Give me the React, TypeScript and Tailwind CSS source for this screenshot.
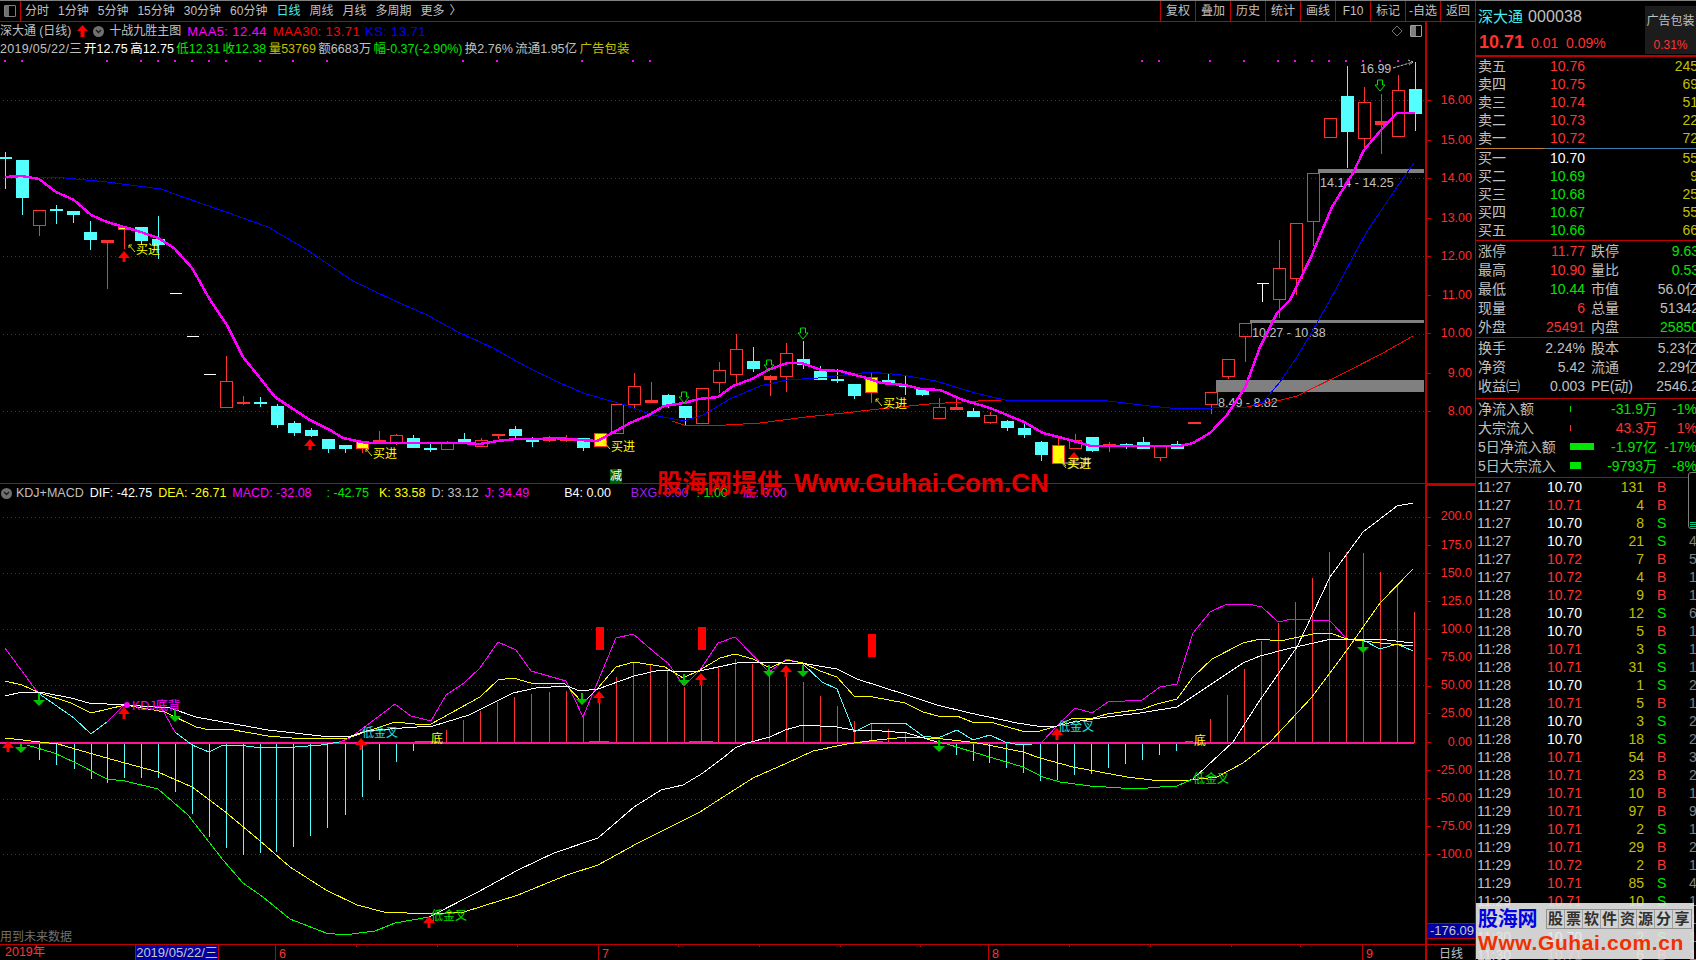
import React from "react";

type Candle = [number, "c" | "r" | "y" | "d" | "t", number, number, number, number];

const cx = (i: number) => Math.round(5.4 + 16.98 * i) + 0.5;

// index, kind, body top, body bottom, wick top, wick bottom
const candles: Candle[] = [
  [0, "c", 157, 159, 152, 189], [1, "c", 160, 198, 160, 215], [2, "r", 210, 226, 210, 236], [3, "c", 209, 211, 205, 224],
  [4, "c", 211, 215, 211, 223], [5, "c", 232, 240, 221, 250], [6, "r", 240, 243, 240, 289], [7, "y", 227, 230, 227, 249],
  [8, "c", 227, 241, 227, 245], [9, "c", 239, 245, 216, 259], [10, "d", 293, 293, 293, 293], [11, "d", 336, 336, 336, 336],
  [12, "d", 374, 374, 374, 374], [13, "r", 381, 408, 356, 408], [14, "r", 402, 404, 396, 405], [15, "c", 402, 403, 397, 407],
  [16, "c", 406, 425, 404, 428], [17, "c", 423, 433, 421, 436], [18, "c", 430, 436, 428, 437], [19, "c", 439, 449, 439, 453],
  [20, "c", 445, 449, 445, 453], [21, "y", 441, 449, 441, 453], [22, "r", 440, 444, 431, 444], [23, "r", 435, 443, 434, 445],
  [24, "c", 438, 448, 435, 448], [25, "c", 448, 449, 444, 452], [26, "r", 442, 450, 441, 450], [27, "c", 439, 443, 433, 443],
  [28, "r", 440, 447, 438, 447], [29, "r", 434, 436, 434, 439], [30, "c", 429, 436, 426, 438], [31, "c", 440, 441, 437, 447],
  [32, "r", 439, 441, 436, 442], [33, "r", 439, 441, 435, 442], [34, "c", 438, 448, 438, 451], [35, "y", 433, 447, 433, 447],
  [36, "r", 404, 434, 404, 434], [37, "r", 386, 405, 373, 408], [38, "r", 400, 403, 382, 403], [39, "c", 395, 405, 394, 408],
  [40, "c", 406, 418, 406, 426], [41, "r", 388, 424, 388, 424], [42, "r", 370, 383, 362, 393], [43, "r", 349, 375, 334, 386],
  [44, "c", 361, 369, 347, 372], [45, "r", 376, 380, 375, 396], [46, "r", 353, 377, 343, 392], [47, "c", 359, 365, 341, 369],
  [48, "c", 371, 380, 366, 380], [49, "c", 379, 380, 369, 383], [50, "c", 384, 396, 384, 399], [51, "y", 377, 393, 373, 403],
  [52, "c", 380, 383, 374, 383], [53, "c", 385, 386, 376, 395], [54, "c", 389, 395, 389, 396], [55, "r", 407, 419, 398, 419],
  [56, "r", 407, 410, 399, 410], [57, "c", 411, 417, 408, 417], [58, "r", 415, 423, 412, 424], [59, "c", 421, 428, 420, 431],
  [60, "c", 428, 435, 424, 438], [61, "c", 442, 455, 441, 461], [62, "y", 445, 464, 437, 464], [63, "r", 440, 449, 434, 449],
  [64, "c", 437, 451, 437, 452], [65, "r", 444, 447, 442, 452], [66, "c", 444, 447, 443, 449], [67, "c", 442, 449, 437, 449],
  [68, "r", 446, 458, 446, 461], [69, "c", 444, 449, 441, 449], [70, "r", 422, 424, 422, 424], [71, "r", 392, 405, 392, 414],
  [72, "r", 359, 377, 359, 379], [73, "r", 323, 337, 323, 362], [74, "t", 283, 283, 283, 302], [75, "r", 268, 300, 240, 318],
  [76, "r", 223, 279, 223, 295], [77, "r", 173, 222, 173, 246], [78, "r", 118, 138, 118, 138], [79, "c", 96, 132, 66, 168],
  [80, "r", 102, 139, 87, 150], [81, "r", 121, 125, 94, 154], [82, "r", 90, 137, 75, 137], [83, "c", 89, 114, 62, 131],
];

const maa5 = [[5, 177], [22, 176], [39, 179], [56, 192], [74, 200], [91, 215], [107, 222], [124, 227], [141, 232], [158, 238], [174, 248], [192, 268], [209, 298], [227, 325], [243, 357], [260, 378], [275, 397], [293, 409], [310, 420], [330, 430], [343, 438], [357, 441], [367, 443], [463, 443], [480, 444], [497, 441], [517, 439], [540, 439], [553, 438], [570, 439], [580, 440], [597, 441], [605, 437], [630, 423], [649, 415], [664, 406], [684, 403], [699, 399], [718, 397], [733, 386], [752, 379], [768, 370], [787, 363], [802, 363], [821, 370], [840, 371], [863, 377], [882, 383], [905, 385], [921, 389], [940, 390], [963, 400], [990, 408], [1024, 422], [1043, 433], [1070, 440], [1091, 446], [1180, 446], [1193, 443], [1210, 433], [1227, 415], [1245, 388], [1260, 347], [1277, 313], [1290, 300], [1311, 257], [1332, 207], [1353, 173], [1364, 150], [1381, 130], [1397, 113], [1415, 113]];
const blue = [[40, 178], [49, 177], [65, 178], [107, 182], [161, 189], [183, 197], [223, 211], [268, 227], [304, 248], [353, 281], [393, 300], [427, 315], [460, 333], [493, 348], [527, 367], [560, 383], [583, 393], [600, 398], [622, 404], [653, 415], [684, 421], [703, 415], [730, 399], [760, 386], [787, 380], [818, 378], [844, 375], [871, 372], [902, 375], [936, 381], [975, 393], [1005, 400], [1100, 400], [1150, 406], [1170, 408], [1213, 408], [1247, 407], [1263, 402], [1280, 382], [1297, 357], [1313, 330], [1330, 300], [1366, 233], [1397, 187], [1414, 163]];
const ma30a = [[672, 421], [684, 425], [726, 425], [760, 423], [806, 417], [844, 413], [879, 409], [929, 404], [978, 401], [1001, 400]];
const ma30b = [[1247, 407], [1277, 401], [1297, 396], [1350, 370], [1383, 353], [1413, 336]];

const kWhite = [[5, 696], [22, 692], [45, 693], [71, 698], [89, 703], [125, 705], [170, 708], [196, 717], [223, 722], [268, 730], [321, 736], [348, 737], [366, 731], [402, 728], [433, 726], [469, 715], [513, 693], [536, 688], [567, 686], [580, 691], [598, 689], [634, 676], [660, 670], [683, 672], [700, 671], [718, 667], [737, 663], [757, 662], [807, 664], [837, 669], [857, 679], [907, 695], [937, 705], [970, 713], [1017, 723], [1037, 726], [1057, 726], [1073, 722], [1107, 717], [1140, 713], [1177, 707], [1213, 683], [1243, 663], [1260, 656], [1287, 649], [1327, 640], [1347, 639], [1387, 640], [1413, 643]];
const kYellow = [[5, 681], [22, 685], [40, 693], [71, 703], [91, 713], [125, 705], [165, 712], [196, 727], [210, 730], [228, 729], [268, 736], [304, 739], [348, 738], [371, 730], [395, 722], [415, 724], [431, 724], [480, 697], [498, 680], [513, 678], [531, 683], [565, 684], [583, 703], [598, 688], [616, 667], [634, 662], [665, 667], [683, 678], [700, 670], [720, 658], [735, 654], [753, 659], [770, 668], [787, 660], [803, 663], [820, 671], [837, 677], [854, 696], [873, 697], [905, 703], [923, 712], [938, 716], [957, 716], [972, 722], [990, 722], [1022, 731], [1040, 731], [1057, 726], [1073, 718], [1090, 719], [1107, 714], [1143, 709], [1157, 704], [1177, 699], [1193, 677], [1212, 659], [1243, 643], [1260, 639], [1280, 641], [1313, 634], [1330, 633], [1347, 639], [1380, 643], [1413, 646]];
const jParts: [string, number[][]][] = [
  ["#ff00ff", [[5, 648], [38, 693]]],
  ["#54ffff", [[38, 693], [74, 718], [91, 734], [107, 722]]],
  ["#ff00ff", [[107, 722], [124, 705], [161, 707], [175, 732]]],
  ["#54ffff", [[175, 732], [192, 745], [209, 752], [223, 745], [237, 745], [254, 747], [295, 747], [321, 745], [339, 742]]],
  ["#ff00ff", [[339, 742], [350, 738], [395, 704], [411, 716], [431, 721], [446, 695], [464, 683], [480, 668], [498, 642], [516, 650], [531, 671], [566, 681], [583, 717], [616, 638], [633, 634], [660, 657], [668, 663], [684, 686], [700, 670], [718, 643], [735, 637], [769, 672], [787, 659], [803, 664]]],
  ["#54ffff", [[803, 664], [822, 682], [837, 689], [854, 732], [872, 723], [905, 723], [923, 736], [938, 738], [957, 730], [973, 740], [990, 735], [1005, 742], [1015, 744], [1032, 744]]],
  ["#ff00ff", [[1032, 744], [1042, 742], [1057, 726], [1075, 708], [1092, 713], [1108, 702], [1142, 700], [1160, 687], [1177, 684], [1193, 633], [1210, 612], [1227, 604], [1248, 604], [1262, 607], [1278, 622], [1292, 619], [1330, 621], [1347, 639], [1363, 640]]],
  ["#54ffff", [[1363, 640], [1380, 649], [1397, 644], [1413, 651]]],
];
const deaParts: [string, number[][]][] = [
  ["#ffff00", [[5, 738], [40, 742], [58, 744], [89, 753], [114, 760], [158, 772], [192, 787], [223, 810], [259, 840], [290, 867], [326, 890], [357, 905], [384, 912], [429, 914], [464, 912], [518, 895], [567, 875], [598, 865], [638, 843], [700, 812], [720, 799], [753, 778], [787, 763], [813, 751], [847, 744], [877, 740], [907, 737], [943, 739], [970, 742], [983, 744], [1023, 752], [1040, 758], [1073, 767], [1127, 777], [1160, 781], [1190, 780], [1217, 777], [1243, 763], [1270, 742], [1312, 697], [1347, 650], [1380, 603], [1413, 569]]],
];
const difParts: [string, number[][]][] = [
  ["#00ff00", [[27, 745], [54, 753], [74, 762], [107, 779], [125, 781], [158, 789], [188, 815], [223, 860], [243, 883], [263, 897], [290, 919], [326, 933], [344, 935], [375, 931], [395, 923], [429, 917]]],
  ["#ffffff", [[429, 917], [478, 892], [518, 870], [554, 853], [598, 838], [634, 807], [661, 790], [683, 785], [703, 773], [723, 758], [735, 748], [747, 743], [770, 737], [785, 730], [803, 725], [837, 727], [853, 730], [870, 730], [907, 733], [937, 742]]],
  ["#00ff00", [[937, 742], [947, 744], [973, 752], [1023, 767], [1043, 777], [1060, 782], [1090, 786], [1137, 789], [1160, 787], [1177, 786], [1193, 779]]],
  ["#ffffff", [[1193, 779], [1233, 742], [1260, 700], [1297, 647], [1330, 577], [1363, 532], [1397, 506], [1413, 503]]],
];
// histogram bottoms, by x
const bars: number[][] = [[39, 760], [56, 765], [74, 769], [91, 779], [107, 783], [124, 778], [141, 778], [158, 778], [175, 792], [192, 814], [209, 837], [226, 848], [243, 855], [260, 853], [276, 852], [293, 847], [310, 836], [327, 828], [345, 815], [362, 797], [379, 780], [396, 762], [413, 751], [446, 730], [463, 720], [480, 711], [497, 702], [514, 697], [531, 694], [549, 692], [566, 691], [583, 717], [599, 697], [616, 677], [633, 663], [650, 665], [667, 670], [684, 687], [701, 677], [718, 667], [735, 659], [752, 664], [769, 675], [786, 673], [803, 682], [820, 696], [837, 706], [854, 721], [871, 724], [888, 729], [905, 733], [956, 755], [973, 761], [989, 763], [1006, 768], [1023, 773], [1040, 781], [1057, 780], [1074, 775], [1091, 774], [1108, 768], [1125, 764], [1142, 760], [1159, 755], [1176, 751], [1210, 719], [1227, 695], [1244, 669], [1261, 641], [1278, 623], [1295, 602], [1312, 578], [1329, 552], [1346, 552], [1363, 553], [1380, 572], [1397, 584], [1414, 612]];

const dotIdx = [5, 22, 107, 141, 158, 175, 192, 209, 226, 260, 293, 327, 463, 497, 582, 633, 650, 1142, 1159, 1210, 1244, 1278, 1295, 1312, 1329, 1346, 1363, 1380, 1398];

const pts = (p: number[][]) => p.map((q) => q.join(",")).join(" ");

function GridLine({ y }: { y: number }) {
  return <line x1={3} x2={1424} y1={y + 0.5} y2={y + 0.5} stroke="#a01010" strokeDasharray="1 3" />;
}

function UpArrow({ x, y1, y2 }: { x: number; y1: number; y2: number }) {
  return <path d={`M${x} ${y1}L${x + 6} ${y1 + 7}H${x + 1.5}V${y2}H${x - 1.5}V${y1 + 7}H${x - 6}Z`} fill="#ff0000" />;
}
function DownArrow({ x, y1, y2 }: { x: number; y1: number; y2: number }) {
  return <path d={`M${x} ${y2}L${x + 6} ${y2 - 6}H${x + 1}V${y1}H${x - 1}V${y2 - 6}H${x - 6}Z`} fill="#00c000" />;
}
function HollowDown({ x, y1 }: { x: number; y1: number }) {
  return <path d={`M${x - 2.5} ${y1}H${x + 2.5}V${y1 + 5}H${x + 5}L${x} ${y1 + 11}L${x - 5} ${y1 + 5}H${x - 2.5}Z`} fill="none" stroke="#00e000" />;
}
function Buy({ x, y }: { x: number; y: number }) {
  return (
    <g>
      <path d={`M${x} ${y - 5}L${x + 6} ${y + 2}M${x} ${y - 5}V${y - 2}M${x} ${y - 5}H${x + 3}`} stroke="#e0e000" fill="none" />
      <text x={x + 7} y={y + 4} fontSize={12} fill="#ffff00">买进</text>
    </g>
  );
}

function UpperChart() {
  return (
    <svg className="block w-[1425px] h-[426px]" viewBox="0 58 1425 426">
      {[100, 178, 256, 334, 411].map((y) => <GridLine key={y} y={y} />)}
      {dotIdx.map((x) => <rect key={x} x={x - 1} y={60} width={2} height={2} fill="#ff00ff" />)}
      <rect x={1318} y={169} width={106} height={4} fill="#808080" />
      <rect x={1250} y={320} width={174} height={3} fill="#808080" />
      <rect x={1216} y={380} width={208} height={12} fill="#808080" />
      <g shapeRendering="crispEdges">
        {candles.map(([i, k, t, b, wt, wb]) => {
          const x = cx(i);
          if (k === "d") return <line key={i} x1={x - 6} x2={x + 6} y1={t + 0.5} y2={t + 0.5} stroke="#ffffff" />;
          if (k === "t")
            return (
              <g key={i} stroke="#ffffff">
                <line x1={x - 6} x2={x + 6} y1={t + 0.5} y2={t + 0.5} />
                <line x1={x} x2={x} y1={t} y2={wb} />
              </g>
            );
          const color = k === "c" ? "#54ffff" : "#ff3232";
          return (
            <g key={i}>
              <line x1={x} x2={x} y1={wt} y2={t} stroke={color} />
              <line x1={x} x2={x} y1={b} y2={wb} stroke={color} />
              <rect
                x={x - 6}
                y={t + 0.5}
                width={12}
                height={Math.max(b - t - 1, 1)}
                fill={k === "r" ? (b - t < 5 ? "#ff3232" : "none") : k === "y" ? "#ffff00" : "#54ffff"}
                stroke={k === "c" ? "#54ffff" : "#ff3232"}
              />
            </g>
          );
        })}
      </g>
      <text x={1320} y={187} fontSize={12.5} fill="#c0c0c0">14.14 - 14.25</text>
      <text x={1252} y={337} fontSize={12.5} fill="#c0c0c0">10.27 - 10.38</text>
      <text x={1218} y={407} fontSize={12.5} fill="#c0c0c0">8.49 - 8.82</text>
      <g shapeRendering="crispEdges">
        <polyline points={pts(blue)} fill="none" stroke="#0000ff" />
        <polyline points={pts(ma30a)} fill="none" stroke="#ff0000" />
        <polyline points={pts(ma30b)} fill="none" stroke="#ff0000" />
        <polyline points={pts(maa5)} fill="none" stroke="#ff00ff" strokeWidth={2.5} />
      </g>
      <UpArrow x={124} y1={251} y2={262} />
      <UpArrow x={310} y1={439} y2={450} />
      <UpArrow x={1074} y1={452} y2={463} />
      <HollowDown x={684} y1={392} />
      <HollowDown x={769} y1={360} />
      <HollowDown x={803} y1={328} />
      <HollowDown x={1380} y1={80} />
      <Buy x={129} y={250} />
      <Buy x={366} y={454} />
      <Buy x={604} y={447} />
      <Buy x={876} y={404} />
      <path d="M1062 463L1066 468M1062 463H1080" stroke="#c0c0c0" fill="none" />
      <text x={1068} y={468} fontSize={12} fill="#a0a0a0">买开</text>
      <Buy x={1060} y={464} />
      <text x={1360} y={73} fontSize={12.5} fill="#c0c0c0">16.99</text>
      <path d="M1393 68L1413 62L1408 60M1413 62L1409 65" stroke="#c0c0c0" strokeDasharray="3 1" fill="none" />
      <rect x={610} y={469} width={12} height={14} fill="#006000" />
      <text x={610} y={480} fontSize={12} fill="#ffffff">减</text>
    </svg>
  );
}

function LowerChart() {
  return (
    <svg className="block w-[1425px] h-[443px]" viewBox="0 502 1425 443">
      {[517, 573, 629, 685, 799, 854].map((y) => <GridLine key={y} y={y} />)}
      <g shapeRendering="crispEdges">
        {bars.map(([x, y]) => (
          <line key={x} x1={x + 0.5} x2={x + 0.5} y1={743} y2={y} stroke={y > 743 ? "#54ffff" : "#ff3232"} />
        ))}
        {[[415, 437], [589, 609], [689, 713], [860, 883], [1185, 1193]].map(([a, b]) => (
          <line key={a} x1={a} x2={b} y1={741.5} y2={741.5} stroke="#00c000" />
        ))}
        <line x1={0} x2={1414} y1={743} y2={743} stroke="#ff1493" strokeWidth={2} />
        {[...deaParts, ...difParts, ...jParts].map(([c, p], i) => (
          <polyline key={i} points={pts(p)} fill="none" stroke={c} />
        ))}
        <polyline points={pts(kYellow)} fill="none" stroke="#ffff00" />
        <polyline points={pts(kWhite)} fill="none" stroke="#ffffff" />
      </g>
      <rect x={596} y={627} width={8} height={23} fill="#ff0000" />
      <rect x={698} y={627} width={8} height={23} fill="#ff0000" />
      <rect x={868} y={634} width={8} height={23} fill="#ff0000" />
      <UpArrow x={8} y1={741} y2={752} />
      <UpArrow x={124} y1={707} y2={719} />
      <UpArrow x={361} y1={738} y2={750} />
      <UpArrow x={599} y1={691} y2={703} />
      <UpArrow x={701} y1={673} y2={685} />
      <UpArrow x={786} y1={665} y2={677} />
      <UpArrow x={1057} y1={728} y2={740} />
      <UpArrow x={429} y1={916} y2={928} />
      <DownArrow x={21} y1={744} y2={753} />
      <DownArrow x={39} y1={693} y2={706} />
      <DownArrow x={175} y1={709} y2={722} />
      <DownArrow x={582} y1={693} y2={705} />
      <DownArrow x={684} y1={674} y2={686} />
      <DownArrow x={769} y1={665} y2={677} />
      <DownArrow x={803} y1={665} y2={677} />
      <DownArrow x={939} y1={740} y2={752} />
      <DownArrow x={1363} y1={641} y2={653} />
      <circle cx={127} cy={705} r={3} fill="#ff00ff" />
      <text x={132} y={710} fontSize={12.5} fill="#ff00ff">KDJ底背</text>
      <text x={362} y={737} fontSize={12} fill="#20e0e0">低金叉</text>
      <text x={1058} y={731} fontSize={12} fill="#20e0e0">低金叉</text>
      <text x={431} y={743} fontSize={12} fill="#ffff00">底</text>
      <text x={1194} y={745} fontSize={12} fill="#ffff00">底</text>
      <text x={431} y={920} fontSize={12} fill="#00e000">低金叉</text>
      <text x={1193} y={783} fontSize={12} fill="#00e000">低金叉</text>
    </svg>
  );
}

function Axis({ labels, ticks, className, children }: { labels: [number, string][]; ticks: number[]; className?: string; children?: React.ReactNode }) {
  return (
    <div className={`relative w-[50px] border-l-2 border-[#c00000] ${className ?? ""}`}>
      {ticks.map((y) => (
        <span key={y} className="absolute left-0 w-[4px] h-px bg-[#c00000]" style={{ top: y }} />
      ))}
      {labels.map(([y, t]) => (
        <span key={t} className="absolute right-[3px] text-[12.5px] leading-[14px] text-[#ff2a2a]" style={{ top: y - 7 }}>
          {t}
        </span>
      ))}
      {children}
    </div>
  );
}

function ChevronDot() {
  return (
    <span className="flex w-[11px] h-[11px] rounded-full bg-[#707070] items-center justify-center">
      <svg width="7" height="5" viewBox="0 0 7 5"><path d="M1 1l2.5 2.5L6 1" stroke="#1a1a1a" strokeWidth="1.4" fill="none" /></svg>
    </span>
  );
}

function Row({ label, value, color = "text-[#ff3232]", right, rc = "text-[#c0c000]" }: { label: string; value: string; color?: string; right: string; rc?: string }) {
  return (
    <div className="flex h-[18px] items-center pl-[2px]">
      <span className="w-[60px] text-[#c0c0c0]">{label}</span>
      <span className={`w-[47px] text-right ${color}`}>{value}</span>
      <span className={`flex-1 text-right mr-[-2px] ${rc}`}>{right}</span>
    </div>
  );
}

function Stat({ a, av, ac = "text-[#c0c0c0]", b, bv, bc = "text-[#c0c0c0]" }: { a: string; av: string; ac?: string; b: string; bv: string; bc?: string }) {
  return (
    <div className="flex h-[19px] items-center pl-[2px]">
      <span className="w-[60px] text-[#c0c0c0]">{a}</span>
      <span className={`w-[47px] text-right ${ac}`}>{av}</span>
      <span className="ml-[6px] w-[44px] whitespace-nowrap text-[#c0c0c0]">{b}</span>
      <span className={`flex-1 text-right whitespace-nowrap mr-[-3px] ${bc}`}>{bv}</span>
    </div>
  );
}

function Flow({ label, bar, barColor, value, pct, color }: { label: string; bar: number; barColor: string; value: string; pct: string; color: string }) {
  return (
    <div className="flex h-[19px] items-center pl-[2px] whitespace-nowrap">
      <span className="w-[92px] text-[#c0c0c0]">{label}</span>
      <span className="w-[24px] flex items-center">
        <span className={`block ${barColor} ${bar > 1 ? "h-[7px]" : "h-[6px]"}`} style={{ width: bar }} />
      </span>
      <span className={`w-[63px] text-right ${color}`}>{value}</span>
      <span className={`flex-1 text-right mr-[-1px] ${color}`}>{pct}</span>
    </div>
  );
}

const ticksData: [string, string, string, string, string][] = [
  ["11:27", "10.70", "131", "B", "127"], ["11:27", "10.71", "4", "B", "268"], ["11:27", "10.70", "8", "S", "133"], ["11:27", "10.70", "21", "S", "431"],
  ["11:27", "10.72", "7", "B", "512"], ["11:27", "10.72", "4", "B", "138"], ["11:28", "10.72", "9", "B", "172"], ["11:28", "10.70", "12", "S", "654"],
  ["11:28", "10.70", "5", "B", "139"], ["11:28", "10.71", "3", "S", "112"], ["11:28", "10.71", "31", "S", "123"], ["11:28", "10.70", "1", "S", "281"],
  ["11:28", "10.71", "5", "B", "176"], ["11:28", "10.70", "3", "S", "276"], ["11:28", "10.70", "18", "S", "231"], ["11:28", "10.71", "54", "B", "327"],
  ["11:28", "10.71", "23", "B", "214"], ["11:29", "10.71", "10", "B", "136"], ["11:29", "10.71", "97", "B", "952"], ["11:29", "10.71", "2", "S", "114"],
  ["11:29", "10.71", "29", "B", "262"], ["11:29", "10.72", "2", "B", "172"], ["11:29", "10.71", "85", "S", "418"], ["11:29", "10.71", "10", "S", "157"],
  ["11:30", "10.71", "4", "S", "123"], ["11:30", "10.70", "2", "S", "112"], ["11:30", "10.71", "6", "B", "141"],
];

function RightPanel() {
  return (
    <div className="relative w-[220px] h-[959px] overflow-hidden text-[14px] leading-[18px]">
      <div className="relative h-[56px] border-b-2 border-[#c00000]">
        <div className="flex items-center h-[32px] pl-[2px] text-[16px]">
          <span className="text-[#40f0f0] text-[15px]">深大通</span>
          <span className="ml-[5px] text-[#c0c0c0] tracking-[0.1px]">000038</span>
        </div>
        <div className="flex items-baseline pl-[3px] text-[#ff3232]">
          <span className="w-[52px] text-[18px] font-bold">10.71</span>
          <span className="w-[35px]">0.01</span>
          <span>0.09%</span>
        </div>
        <div className="absolute right-0 top-[5px] w-[51px] h-[48px] bg-[#1c1c1c] flex flex-col items-center text-[12px]">
          <span className="mt-[6px] text-[#c0c0c0]">广告包装</span>
          <span className="mt-[6px] text-[#ff3232]">0.31%</span>
        </div>
      </div>
      <Row label="卖五" value="10.76" right="245" />
      <Row label="卖四" value="10.75" right="69" />
      <Row label="卖三" value="10.74" right="51" />
      <Row label="卖二" value="10.73" right="22" />
      <Row label="卖一" value="10.72" right="72" />
      <div className="flex h-px mt-[1px]">
        <span className="w-[69px] bg-[#c08030]" />
        <span className="flex-1 bg-[#4080b0]" />
      </div>
      <Row label="买一" value="10.70" color="text-white" right="55" />
      <Row label="买二" value="10.69" color="text-[#00e600]" right="9" />
      <Row label="买三" value="10.68" color="text-[#00e600]" right="25" />
      <Row label="买四" value="10.67" color="text-[#00e600]" right="55" />
      <Row label="买五" value="10.66" color="text-[#00e600]" right="66" />
      <div className="h-px mt-[1px] bg-[#c00000]" />
      <Stat a="涨停" av="11.77" ac="text-[#ff3232]" b="跌停" bv="9.63" bc="text-[#00e600]" />
      <Stat a="最高" av="10.90" ac="text-[#ff3232]" b="量比" bv="0.53" bc="text-[#00e600]" />
      <Stat a="最低" av="10.44" ac="text-[#00e600]" b="市值" bv="56.0亿" />
      <Stat a="现量" av="6" ac="text-[#ff3232]" b="总量" bv="51342" />
      <Stat a="外盘" av="25491" ac="text-[#ff3232]" b="内盘" bv="25850" bc="text-[#00e600]" />
      <div className="h-px mt-[1px] bg-[#c00000]" />
      <Stat a="换手" av="2.24%" b="股本" bv="5.23亿" />
      <Stat a="净资" av="5.42" b="流通" bv="2.29亿" />
      <Stat a="收益㈢" av="0.003" b="PE(动)" bv="2546.2" />
      <div className="h-px mt-[3px] bg-[#c00000]" />
      <Flow label="净流入额" bar={1} barColor="bg-[#00e600]" value="-31.9万" pct="-1%" color="text-[#00e600]" />
      <Flow label="大宗流入" bar={1} barColor="bg-[#ff3232]" value="43.3万" pct="1%" color="text-[#ff3232]" />
      <Flow label="5日净流入额" bar={24} barColor="bg-[#00e600]" value="-1.97亿" pct="-17%" color="text-[#00e600]" />
      <Flow label="5日大宗流入" bar={11} barColor="bg-[#00e600]" value="-9793万" pct="-8%" color="text-[#00e600]" />
      <div className="h-px mt-[2px] bg-[#c00000]" />
      {ticksData.map(([t, p, q, s, n], i) => (
        <div key={i} className="flex h-[18px] items-center pl-[1px] whitespace-nowrap">
          <span className="shrink-0 w-[40px] text-[#c0c0c0]">{t}</span>
          <span className={`shrink-0 w-[65px] text-right ${p === "10.70" ? "text-white" : "text-[#ff3232]"}`}>{p}</span>
          <span className="shrink-0 w-[62px] text-right text-[#c0c000]">{q}</span>
          <span className={`shrink-0 ml-[13px] w-[32px] ${s === "B" ? "text-[#ff3232]" : "text-[#00e600]"}`}>{s}</span>
          <span className="shrink-0 text-[#808080]">{n}</span>
        </div>
      ))}
      {/* floating handle */}
      <div className="absolute right-[-4px] top-[471px] w-[12px] h-[57px] rounded-[3px] border border-[#808080] bg-black flex flex-col justify-end gap-[1px] pb-[1px] pl-[1px]">
        <span className="h-px bg-[#00c080]" />
        <span className="h-px bg-[#00c080]" />
        <span className="h-px bg-[#00c080]" />
      </div>
      {/* site stamp */}
      <div className="absolute left-[-2px] top-[902px] w-[220px] h-[56px] bg-[#e8e8e8]/90 pl-[4px] pt-[6px]">
        <div className="flex items-center gap-[9px]">
          <span className="text-[20px] leading-[20px] font-bold text-[#0000e0] tracking-[-0.3px]">股海网</span>
          <div className="flex border border-[#909090]">
            {"股票软件资源分享".split("").map((c) => (
              <span key={c} className="w-[18px] h-[18px] text-center text-[15px] leading-[18px] font-bold text-[#303030] border-r border-[#a0a0a0] last:border-r-0">{c}</span>
            ))}
          </div>
        </div>
        <div className="mt-[3px] text-[21px] leading-[22px] font-bold text-[#f03000] tracking-[0.6px]">Www.Guhai.com.cn</div>
      </div>
    </div>
  );
}

const menu = ["分时", "1分钟", "5分钟", "15分钟", "30分钟", "60分钟", "日线", "周线", "月线", "多周期", "更多"];
const buttons = ["复权", "叠加", "历史", "统计", "画线", "F10", "标记", "-自选", "返回"];
const axisTicksBottom = [356, 437, 517, 678, 759, 840, 920, 1069, 1150, 1231, 1300];

export default function App() {
  return (
    <div className="w-[1696px] h-[960px] overflow-hidden bg-black text-[12px] text-[#c0c0c0] [font-family:'Liberation_Sans','Noto_Sans_CJK_SC',sans-serif]">
      <div className="h-px bg-[#808080]" />
      <div className="flex h-[959px]">
        {/* left: charts */}
        <div className="relative flex flex-col w-[1476px] border-r border-[#c00000]">
          {/* toolbar */}
          <div className="flex h-[21px] items-center border-b border-[#c00000]">
            <div className="flex items-center justify-center w-[21px] h-full border-r border-[#c00000]">
              <span className="flex w-[12px] h-[12px] border border-[#808080] rounded-[1px]"><span className="w-[4px] bg-[#707070]" /></span>
            </div>
            <div className="flex items-center gap-[9px] ml-[4px]">
              {menu.map((m) => (
                <span key={m} className={m === "日线" ? "text-[#40f0f0]" : ""}>{m}</span>
              ))}
              <span className="ml-[-4px]">〉</span>
            </div>
            <div className="flex ml-auto h-full">
              {buttons.map((b) => (
                <span key={b} className="w-[35px] flex items-center justify-center border-l border-[#c00000]">{b}</span>
              ))}
            </div>
          </div>
          {/* upper pane */}
          <div className="flex h-[462px] border-b border-[#c00000]">
            <div className="w-[1425px]">
              <div className="h-[36px] leading-[17px]">
                <div className="flex items-center h-[18px]">
                  <span>深大通 (日线)</span>
                  <svg className="ml-[6px]" width="11" height="12" viewBox="0 0 11 12"><path d="M5.5 0L11 6H7.5V12H3.5V6H0Z" fill="#ff0000" /></svg>
                  <span className="ml-[5px]"><ChevronDot /></span>
                  <span className="ml-[5px]">十战九胜主图</span>
                  <span className="ml-[6px] text-[13px] tracking-[0.4px] text-[#ff00ff]">MAA5: 12.44</span>
                  <span className="ml-[6px] text-[13px] tracking-[0.4px] text-[#ff0000]">MAA30: 13.71</span>
                  <span className="ml-[5px] text-[13px] tracking-[0.4px] text-[#0000ff]">KS: 13.71</span>
                  <svg className="ml-auto" width="12" height="12" viewBox="0 0 12 12"><path d="M6 1l5 5-5 5-5-5z" fill="none" stroke="#707070" /></svg>
                  <span className="ml-[7px] mr-[3px] flex w-[12px] h-[12px] border border-[#a0a0a0] rounded-[1px]"><span className="w-[5px] bg-[#808080]" /></span>
                </div>
                <div className="flex items-center h-[18px] gap-[2.4px] whitespace-nowrap text-[12.5px]">
                  <span className="w-[81.6px] tracking-[0.3px]">2019/05/22/三</span>
                  <span className="text-white">开12.75</span>
                  <span className="text-white">高12.75</span>
                  <span className="text-[#00e600]">低12.31</span>
                  <span className="text-[#00e600]">收12.38</span>
                  <span className="text-[#c0c000]">量53769</span>
                  <span>额6683万</span>
                  <span className="text-[#00e600]">幅-0.37(-2.90%)</span>
                  <span>换2.76%</span>
                  <span>流通1.95亿</span>
                  <span className="text-[#c0c000]">广告包装</span>
                </div>
              </div>
              <UpperChart />
            </div>
            <Axis
              ticks={[78, 118, 156, 196, 234, 273, 311, 351, 389]}
              labels={[[78, "16.00"], [118, "15.00"], [156, "14.00"], [196, "13.00"], [234, "12.00"], [273, "11.00"], [311, "10.00"], [351, "9.00"], [389, "8.00"]]}
            />
          </div>
          {/* lower pane */}
          <div className="flex h-[461px] border-b border-[#c00000]">
            <div className="w-[1425px]">
              <div className="flex items-center h-[18px] whitespace-nowrap text-[12.5px]">
                <span className="ml-px"><ChevronDot /></span>
                <span className="ml-[4px]">KDJ+MACD</span>
                <span className="ml-[6px] text-white">DIF: -42.75</span>
                <span className="ml-[6px] text-[#ffff00]">DEA: -26.71</span>
                <span className="ml-[6px] text-[#ff00ff]">MACD: -32.08</span>
                <span className="ml-[15px] text-[#00e600]">: -42.75</span>
                <span className="ml-[10px] text-[#ffff00]">K: 33.58</span>
                <span className="ml-[6px]">D: 33.12</span>
                <span className="ml-[6px] text-[#ff00ff]">J: 34.49</span>
                <span className="ml-[35px] text-white">B4: 0.00</span>
                <span className="ml-[20px] text-[#a020f0]">BXG: 0.00</span>
                <span className="ml-[8px] text-[#00e600]">: 1.00</span>
                <span className="ml-[15px] text-[#ff00ff]">底: 0.00</span>
              </div>
              <LowerChart />
            </div>
            <Axis
              className="border-t-2"
              ticks={[31, 59, 87, 115, 143, 172, 200, 227, 256, 284, 312, 340, 368]}
              labels={[[30, "200.0"], [59, "175.0"], [87, "150.0"], [115, "125.0"], [143, "100.0"], [171, "75.00"], [199, "50.00"], [227, "25.00"], [256, "0.00"], [284, "-25.00"], [312, "-50.00"], [340, "-75.00"], [368, "-100.0"]]}
            >
              <div className="absolute left-0 right-0 top-[437px] h-[16px] bg-[#0000a0] border-y border-[#c00000] text-[13px] leading-[14px] text-right pr-[1px] text-[#c8c8c8]">-176.09</div>
            </Axis>
          </div>
          {/* date axis */}
          <div className="relative flex h-[15px] items-center text-[12.5px] text-[#ff3232]">
            {axisTicksBottom.map((x) => (
              <span key={x} className="absolute top-0 w-px h-[2px] bg-[#c00000]" style={{ left: x }} />
            ))}
            <span className="w-[135px] pl-[5px]">2019年</span>
            <span className="w-[84px] h-full flex items-center justify-center bg-[#0000a0] border-x border-[#c00000] text-[#c8c8c8] text-[13px] whitespace-nowrap">2019/05/22/三</span>
            <span className="w-[56px]" />
            <span className="w-[323px] h-full pl-[3px] border-l border-[#c00000]">6</span>
            <span className="w-[390px] h-full pl-[3px] border-l border-[#c00000]">7</span>
            <span className="w-[374px] h-full pl-[3px] border-l border-[#c00000]">8</span>
            <span className="w-[63px] h-full pl-[3px] border-l border-[#c00000]">9</span>
            <span className="w-[50px] h-full border-l-2 border-[#c00000] text-center text-[#c0c0c0] text-[12px]">日线</span>
          </div>
          {/* future data note over the lower pane */}
          <span className="absolute left-0 top-[927px] text-[#707070]">用到未来数据</span>
          {/* site banner across both panes */}
          <div className="absolute left-[657px] top-[466px] flex gap-[12px] text-[25px] leading-[32px] font-bold text-[#e00000] whitespace-nowrap">
            <span>股海网提供</span>
            <span className="text-[26px]">Www.Guhai.Com.CN</span>
          </div>
        </div>
        <RightPanel />
      </div>
    </div>
  );
}
